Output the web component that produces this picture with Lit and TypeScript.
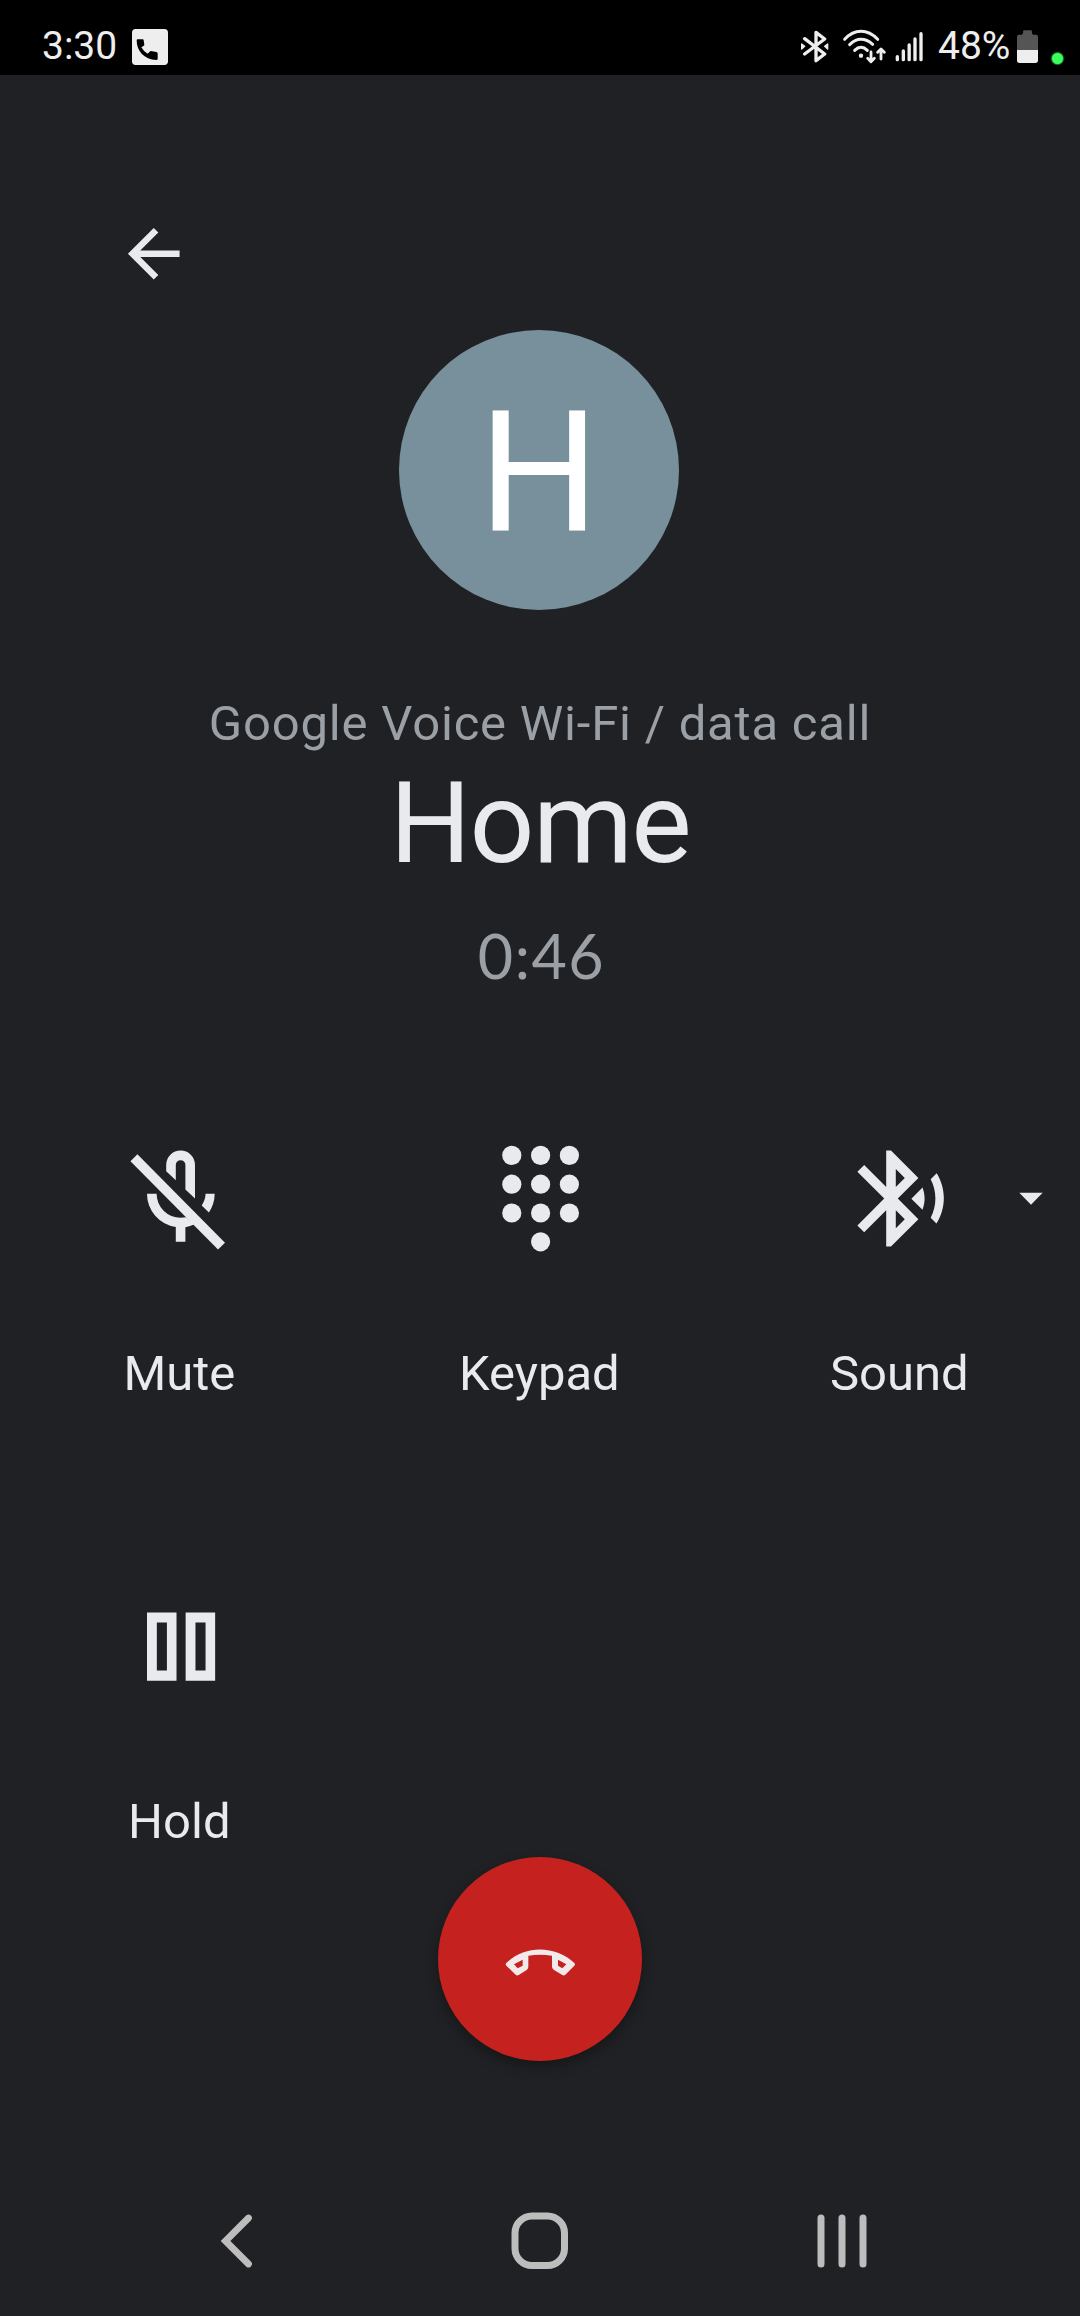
import { LitElement, html, css, svg } from "lit";
import { customElement, property } from "lit/decorators.js";

const muteIcon = svg`
  <path d="M3 2.75 21.25 21.2 19.8 22.6 1.55 4.2Z"/>
  <path d="M9 6.3V5a3 3 0 0 1 6 0v7l-2-1.9V5a1 1 0 0 0-2 0v3.2z"/>
  <path d="M17.2 11H19.1c0 1.5-.45 2.8-1.2 3.9l-1.5-1.45c.45-.75.8-1.55.8-2.45z"/>
  <path d="M5 11h2a5 5 0 0 0 5 5q.6 0 1.15-.1l1.75 1.45q-.9.45-1.9.6V21h-2v-3.07A7 7 0 0 1 5 11z"/>`;

const keypadIcon = svg`${[
  [6, 3], [12, 3], [18, 3],
  [6, 9], [12, 9], [18, 9],
  [6, 15], [12, 15], [18, 15],
  [12, 21],
].map(([x, y]) => svg`<circle cx=${x} cy=${y} r="2"/>`)}`;

const soundIcon = svg`<path d="M14.24 12.01l2.32 2.32c.28-.72.44-1.51.44-2.33 0-.82-.16-1.59-.43-2.31l-2.33 2.32zm5.29-5.3l-1.26 1.26c.63 1.21.98 2.57.98 4.02s-.36 2.82-.98 4.02l1.2 1.2c.97-1.54 1.54-3.36 1.54-5.31-.01-1.89-.55-3.67-1.48-5.19zm-3.82 1L10 2H9v7.59L4.41 5 3 6.41 8.59 12 3 17.59 4.41 19 9 14.41V22h1l5.71-5.71-4.3-4.29 4.3-4.29zM11 5.83l1.88 1.88L11 9.59V5.83zm1.88 10.46L11 18.17v-3.76l1.88 1.88z"/>`;

const holdIcon = svg`<path fill-rule="evenodd" d="M5 4.9h6.15v14.2H5zM7.05 7v10h2.1V7zM13.05 4.9h6.15v14.2h-6.15zM15.1 7v10h2.1V7z"/>`;

@customElement("status-bar")
export class StatusBar extends LitElement {
  static styles = css`
    :host {
      display: flex;
      align-items: flex-start;
      height: 75px;
      box-sizing: border-box;
      padding: 0 17px 0 42px;
      background: #000;
      color: #eee;
      font: 39px/46px Roboto, sans-serif;
    }
    svg { display: block; flex: none; }
    .time { width: 90px; margin-top: 23px; }
    .app { margin-top: 29px; }
    .right { display: flex; align-items: flex-start; margin-left: auto; }
    .bt { margin-top: 29px; }
    .wifi { margin: 29px 0 0 12px; }
    .signal { margin: 31px 0 0 8px; }
    .percent { width: 79px; margin: 23px 0 0 14px; }
    .battery { margin-top: 30px; }
    .privacy {
      width: 11px;
      height: 11px;
      margin: 53px 0 0 14px;
      border-radius: 50%;
      background: #3dff5c;
      box-shadow: 0 0 1px 1px #1c8a2c;
    }
  `;

  render() {
    return html`
      <span class="time">3:30</span>
      <svg class="app" width="36" height="36" viewBox="0 0 108 108">
        <rect width="108" height="108" rx="11" fill="#eee"/>
        <path fill="#000" d="M17 31h15q3 0 3 3l2 13q0 3-3 4l-6 4q7 13 19 19l6-6q2-2 4-2l16 3q4 1 4 4v16q0 4-4 4C36 92 14 66 14 34q0-3 3-3z"/>
      </svg>
      <div class="right">
        <svg class="bt" width="30" height="34" viewBox="63 87 90 102" fill="none" stroke="#eee" stroke-width="10" stroke-linecap="round" stroke-linejoin="round">
          <path d="M77 116 137 162 111 182V97L137 117 77 162"/>
          <path fill="#eee" stroke-width="4" d="M68 132 77 139 68 147zM146 132 137 139 146 147z"/>
        </svg>
        <svg class="wifi" width="45" height="35" viewBox="188 87 135 105" fill="none" stroke="#eee" stroke-width="9" stroke-linecap="round" stroke-linejoin="round">
          <path d="M196 118Q218 94 245 94T295 118M211 134Q227 118 245 118T280 133M226 151Q235 142 245 142T264 151"/>
          <circle cx="245" cy="167" r="6.5" fill="#eee" stroke="none"/>
          <path stroke-width="8.5" d="M275 156V184M265 175 275 185 285 175M305 177V148M295 157 305 147 315 157"/>
        </svg>
        <svg class="signal" width="29" height="31" viewBox="346 92 87 93" stroke="#eee" stroke-width="10" stroke-linecap="round">
          <path d="M353 169V178M371 152V178M388.5 134V178M406 116V178M424 100V178"/>
        </svg>
        <span class="percent">48%</span>
        <svg class="battery" width="21" height="33" viewBox="711 90 63 99">
          <path fill="#555" d="M711 150V110q0-6 6-6h7q5 0 5-6v-3q0-4 4-4h19q4 0 4 4v3q0 6 5 6h7q6 0 6 6v40z"/>
          <path fill="#eee" d="M711 150h63v31q0 8-8 8h-47q-8 0-8-8z"/>
        </svg>
        <span class="privacy"></span>
      </div>
    `;
  }
}

@customElement("call-action")
export class CallAction extends LitElement {
  @property() label = "";
  @property({ attribute: false }) icon: unknown;
  @property({ type: Boolean }) menu = false;

  static styles = css`
    :host {
      position: relative;
      display: flex;
      flex-direction: column;
      align-items: center;
      height: 448px;
      color: #e8eaed;
    }
    svg { display: block; fill: currentColor; }
    .icon { margin-left: 0.8px; }
    .label {
      margin: 89px 1.4px 0 0;
      font: 49px/58px Roboto, sans-serif;
      white-space: nowrap;
    }
    .caret { position: absolute; right: 21px; top: 29px; }
  `;

  render() {
    return html`
      <svg class="icon" width="115.2" height="115.2" viewBox="0 0 24 24">${this.icon}</svg>
      <span class="label">${this.label}</span>
      ${this.menu
        ? html`<svg class="caret" width="56" height="56" viewBox="0 0 24 24"><path d="M7 9.7h10l-5 5.2z"/></svg>`
        : ""}
    `;
  }
}

@customElement("app-root")
export class AppRoot extends LitElement {
  static styles = css`
    :host {
      display: flex;
      flex-direction: column;
      width: 1080px;
      height: 2316px;
      overflow: hidden;
      background: #202124;
      color: #e8eaed;
      font-family: Roboto, sans-serif;
    }
    svg { display: block; }
    .toolbar { height: 255px; box-sizing: border-box; padding: 139.7px 0 0 115px; }
    .caller { display: flex; flex-direction: column; align-items: center; height: 810.8px; }
    .avatar {
      display: flex;
      align-items: center;
      justify-content: center;
      flex: none;
      width: 280px;
      height: 280px;
      box-sizing: border-box;
      padding-top: 6px;
      margin-right: 2px;
      border-radius: 50%;
      background: #78909c;
      color: #fff;
      font-size: 169px;
      line-height: 274px;
    }
    .via {
      margin-top: 85px;
      font-size: 49px;
      line-height: 58px;
      letter-spacing: 0.8px;
      color: #9aa0a6;
      white-space: nowrap;
    }
    .name {
      margin-top: 3px;
      font-size: 114px;
      line-height: 134px;
      letter-spacing: -1.6px;
    }
    .timer {
      margin: 30px 0 0 3px;
      font: 61px/72px Lato, sans-serif;
      letter-spacing: 1.5px;
      color: #9aa0a6;
    }
    .actions { display: grid; grid-template-columns: repeat(3, 360px); height: 716.2px; }
    .hangup {
      display: flex;
      align-items: center;
      justify-content: center;
      flex: none;
      align-self: center;
      width: 204px;
      height: 204px;
      border-radius: 50%;
      background: #c5221f;
      box-shadow: 0 6px 14px rgba(0, 0, 0, 0.32);
    }
    .nav {
      display: grid;
      grid-template-columns: repeat(3, 1fr);
      align-items: center;
      justify-items: center;
      margin-top: 106px;
      padding: 0 85px;
      height: 149px;
    }
  `;

  render() {
    return html`
      <status-bar></status-bar>
      <div class="toolbar">
        <svg width="77.5" height="77.5" viewBox="0 0 24 24" fill="#e8eaed">
          <path d="M20 11H7.83l5.59-5.59L12 4l-8 8 8 8 1.41-1.41L7.83 13H20v-2z"/>
        </svg>
      </div>
      <div class="caller">
        <div class="avatar">H</div>
        <div class="via">Google Voice Wi-Fi / data call</div>
        <div class="name">Home</div>
        <div class="timer">0:46</div>
      </div>
      <div class="actions">
        <call-action label="Mute" .icon=${muteIcon}></call-action>
        <call-action label="Keypad" .icon=${keypadIcon}></call-action>
        <call-action label="Sound" .icon=${soundIcon} menu></call-action>
        <call-action label="Hold" .icon=${holdIcon}></call-action>
      </div>
      <div class="hangup">
        <svg width="80" height="80" viewBox="241 238 240 240" fill="#f4e9ea" fill-rule="evenodd">
          <path d="M259 371C285 344 324 329.5 361 329.5S438 344 464 370q4 4 0 8l-27 27q-4 4-9 1l-26-16q-5-4-5-9V348q-36-6-71 0v34q0 5-5 9l-24 15q-6 3-9-1l-28-27q-4-4 0-7zM283 374l11 12 15-8V360zM415 360v18l13 8 12-12z"/>
        </svg>
      </div>
      <div class="nav">
        <svg width="70" height="70" viewBox="0 0 70 70" fill="none" stroke="#bdbdbd" stroke-width="6.8" stroke-linecap="round">
          <path d="M46.5 12 23.5 35 46.5 58"/>
        </svg>
        <svg width="70" height="70" viewBox="0 0 70 70" fill="none" stroke="#bdbdbd" stroke-width="7">
          <rect x="10" y="10" width="49.5" height="49.5" rx="17"/>
        </svg>
        <svg width="70" height="70" viewBox="0 0 70 70" stroke="#bdbdbd" stroke-width="7" stroke-linecap="round">
          <path d="M13 12V58M34 12V58M55 12V58"/>
        </svg>
      </div>
    `;
  }
}
